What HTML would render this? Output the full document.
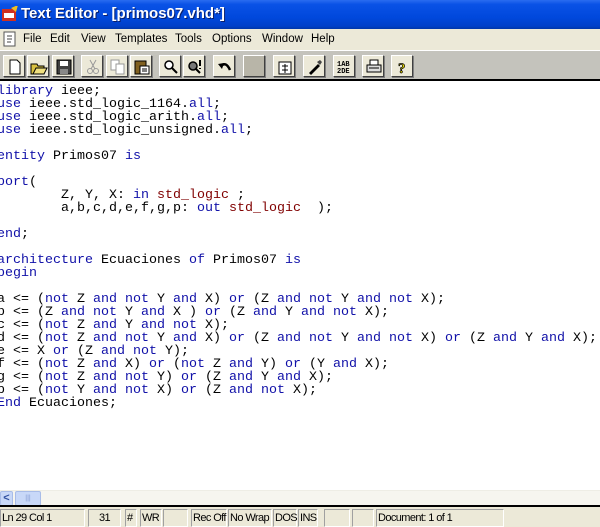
<!DOCTYPE html>
<html><head><meta charset="utf-8"><style>
*{margin:0;padding:0;box-sizing:border-box}
body{width:600px;height:527px;overflow:hidden;background:#fff;font-family:Tahoma,"Liberation Sans",sans-serif;position:relative}
.title{position:absolute;left:0;top:0;width:600px;height:29px;background:linear-gradient(#2a6cf0 0%,#0a52e6 15%,#0048dc 60%,#0040c8 90%,#0036a8 100%);color:#fff;font-size:15px;font-weight:bold;}
.title span{position:absolute;left:21px;top:5px;text-shadow:1px 1px 0 #0a1f6a;font-family:"Liberation Sans",sans-serif}
.menu{position:absolute;left:0;top:29px;width:600px;height:21px;background:#ece9d8;font-size:11.5px;font-family:"Liberation Sans",sans-serif}
.menu span{position:absolute;top:4px}
.tb{position:absolute;left:0;top:50px;width:600px;height:31px;background:#c4c3bc;border-top:1px solid #fff;border-bottom:2px solid #000}
.b{position:absolute;top:4px;width:22px;height:22px;background:#ece9d8;border:1px solid;border-color:#fff #404040 #404040 #fff;box-shadow:1px 1px 0 #808080}
.b svg{position:absolute;left:2px;top:2px}
.ed{position:absolute;left:0;top:82px;width:600px;height:408px;background:#fff;overflow:hidden}
pre{position:absolute;left:-3px;top:3px;font-family:"Liberation Mono",monospace;font-size:13.33px;line-height:13px;color:#000}
.k{color:#1010a8}.t{color:#800000}
.hs{position:absolute;left:0;top:490px;width:600px;height:16px;background:#f6f5ef;border-top:1px solid #eeede5}
.st{position:absolute;left:0;top:505px;width:600px;height:22px;background:#ece9d8;border-top:2px solid #000;font-size:11px;font-family:"Liberation Sans",sans-serif;}
.p{position:absolute;top:2px;height:18px;border:1px solid;border-color:#a0a0a0 #fff #fff #a0a0a0;padding:2px 0 0 1px;white-space:nowrap;letter-spacing:-0.6px}
</style></head><body>
<div class="title">
<svg style="position:absolute;left:1px;top:6px" width="18" height="17"><rect x="1" y="3" width="14" height="12" fill="#d03020"/><rect x="3" y="7" width="10" height="5" fill="#fff"/><path d="M10 2 L17 -1 L15 6z" fill="#f0c020"/></svg>
<span>Text Editor - [primos07.vhd*]</span></div>
<div class="menu">
<svg style="position:absolute;left:3px;top:2px" width="14" height="17"><rect x="1" y="1" width="11" height="14" fill="#fff" stroke="#555"/><path d="M4 5h5M4 8h5M4 11h4" stroke="#444"/></svg>
<span style="left:23px">File</span><span style="left:50px">Edit</span><span style="left:81px">View</span><span style="left:115px">Templates</span><span style="left:175px">Tools</span><span style="left:212px">Options</span><span style="left:262px">Window</span><span style="left:311px">Help</span></div>
<div class="tb">
<div class="b" style="left:3px"><svg width="18" height="18"><path d="M4 2h7l3 3v11H4z" fill="#fff" stroke="#000"/></svg></div>
<div class="b" style="left:27px"><svg width="18" height="18"><path d="M1 6h6l1 2h6v8H1z" fill="#d8c040" stroke="#000"/><path d="M3 16l3-6h11l-3 6z" fill="#f0e080" stroke="#000"/></svg></div>
<div class="b" style="left:52px"><svg width="18" height="18"><rect x="2" y="2" width="14" height="14" fill="#404040" stroke="#000"/><rect x="5" y="3" width="8" height="5" fill="#fff"/><rect x="5" y="11" width="8" height="5" fill="#888"/></svg></div>
<div class="b" style="left:81px"><svg width="18" height="18"><path d="M6 2l5 9M12 2l-5 9" stroke="#999"/><circle cx="6" cy="13" r="2.5" fill="none" stroke="#999"/><circle cx="12" cy="13" r="2.5" fill="none" stroke="#999"/></svg></div>
<div class="b" style="left:106px"><svg width="18" height="18"><rect x="2" y="2" width="8" height="10" fill="#fff" stroke="#999"/><rect x="7" y="6" width="8" height="10" fill="#fff" stroke="#999"/></svg></div>
<div class="b" style="left:130px"><svg width="18" height="18"><rect x="2" y="3" width="11" height="13" fill="#806020" stroke="#000"/><rect x="7" y="8" width="9" height="8" fill="#fff" stroke="#000"/><path d="M9 11h5M9 13h5" stroke="#000"/></svg></div>
<div class="b" style="left:159px"><svg width="18" height="18"><circle cx="7" cy="7" r="4" fill="#fff" stroke="#000" stroke-width="1.5"/><path d="M10 10l5 5" stroke="#000" stroke-width="2"/></svg></div>
<div class="b" style="left:183px"><svg width="18" height="18"><circle cx="7" cy="8" r="4" fill="#777" stroke="#000" stroke-width="1.5"/><path d="M10 11l4 4" stroke="#000" stroke-width="2"/><path d="M14 2v6M14 10v1" stroke="#000" stroke-width="2"/></svg></div>
<div class="b" style="left:213px"><svg width="18" height="18"><path d="M5 8 Q10 3 14 12" fill="none" stroke="#000" stroke-width="2.5"/><path d="M2 6l6-1-2 6z" fill="#000"/></svg></div>
<div class="b" style="left:243px;background:#b8b5a8"></div>
<div class="b" style="left:273px"><svg width="18" height="18"><rect x="3" y="4" width="12" height="12" fill="#fff" stroke="#000"/><path d="M6 8h6M9 6v9M6 12h6" stroke="#000"/></svg></div>
<div class="b" style="left:303px"><svg width="18" height="18"><path d="M3 15l9-9 2 2-9 9z" fill="#000"/><path d="M11 4l3-2 2 2-2 3z" fill="#444"/></svg></div>
<div class="b" style="left:333px"><svg width="18" height="18"><text x="1" y="8" font-size="7" font-family="Liberation Mono" font-weight="bold">1AB</text><text x="1" y="15" font-size="7" font-family="Liberation Mono" font-weight="bold">2DE</text></svg></div>
<div class="b" style="left:362px"><svg width="18" height="18"><rect x="2" y="7" width="14" height="7" fill="#ddd" stroke="#000"/><rect x="5" y="2" width="8" height="5" fill="#fff" stroke="#000"/><path d="M4 10h10" stroke="#000"/></svg></div>
<div class="b" style="left:391px"><svg width="18" height="18"><text x="4" y="15" font-size="15" font-weight="bold" font-family="Liberation Serif" fill="#e0d000" stroke="#000" stroke-width="0.7">?</text></svg></div>
</div>
<div class="ed"><pre><span class="k">library</span> ieee;
<span class="k">use</span> ieee.std_logic_1164.<span class="k">all</span>;
<span class="k">use</span> ieee.std_logic_arith.<span class="k">all</span>;
<span class="k">use</span> ieee.std_logic_unsigned.<span class="k">all</span>;

<span class="k">entity</span> Primos07 <span class="k">is</span>

<span class="k">port</span>(
        Z, Y, X: <span class="k">in</span> <span class="t">std_logic</span> ;
        a,b,c,d,e,f,g,p: <span class="k">out</span> <span class="t">std_logic</span>  );

<span class="k">end</span>;

<span class="k">architecture</span> Ecuaciones <span class="k">of</span> Primos07 <span class="k">is</span>
<span class="k">begin</span>

a &lt;= (<span class="k">not</span> Z <span class="k">and</span> <span class="k">not</span> Y <span class="k">and</span> X) <span class="k">or</span> (Z <span class="k">and</span> <span class="k">not</span> Y <span class="k">and</span> <span class="k">not</span> X);
b &lt;= (Z <span class="k">and</span> <span class="k">not</span> Y <span class="k">and</span> X ) <span class="k">or</span> (Z <span class="k">and</span> Y <span class="k">and</span> <span class="k">not</span> X);
c &lt;= (<span class="k">not</span> Z <span class="k">and</span> Y <span class="k">and</span> <span class="k">not</span> X);
d &lt;= (<span class="k">not</span> Z <span class="k">and</span> <span class="k">not</span> Y <span class="k">and</span> X) <span class="k">or</span> (Z <span class="k">and</span> <span class="k">not</span> Y <span class="k">and</span> <span class="k">not</span> X) <span class="k">or</span> (Z <span class="k">and</span> Y <span class="k">and</span> X);
e &lt;= X <span class="k">or</span> (Z <span class="k">and</span> <span class="k">not</span> Y);
f &lt;= (<span class="k">not</span> Z <span class="k">and</span> X) <span class="k">or</span> (<span class="k">not</span> Z <span class="k">and</span> Y) <span class="k">or</span> (Y <span class="k">and</span> X);
g &lt;= (<span class="k">not</span> Z <span class="k">and</span> <span class="k">not</span> Y) <span class="k">or</span> (Z <span class="k">and</span> Y <span class="k">and</span> X);
p &lt;= (<span class="k">not</span> Y <span class="k">and</span> <span class="k">not</span> X) <span class="k">or</span> (Z <span class="k">and</span> <span class="k">not</span> X);
<span class="k">End</span> Ecuaciones;</pre></div>
<div class="hs">
<div style="position:absolute;left:0;top:0;width:13px;height:15px;background:#c8d8f8;border:1px solid #a8bce8;border-radius:2px;color:#3050a0;font-size:11px;font-weight:bold;line-height:13px;text-align:center">&lt;</div>
<div style="position:absolute;left:15px;top:0;width:26px;height:15px;background:#c8d8f8;border:1px solid #a8bce8;border-radius:2px;color:#8098d0;font-size:7px;text-align:center;line-height:13px">|||</div>
</div>
<div class="st">
<div class="p" style="left:0;width:85px">Ln 29 Col 1</div>
<div class="p" style="left:88px;width:33px;text-align:center;padding-left:0">31</div>
<div class="p" style="left:125px;width:12px">#</div>
<div class="p" style="left:140px;width:22px">WR</div>
<div class="p" style="left:163px;width:25px"></div>
<div class="p" style="left:191px;width:36px">Rec Off</div>
<div class="p" style="left:228px;width:44px">No Wrap</div>
<div class="p" style="left:273px;width:24px">DOS</div>
<div class="p" style="left:298px;width:20px">INS</div>
<div class="p" style="left:324px;width:26px"></div>
<div class="p" style="left:352px;width:22px"></div>
<div class="p" style="left:376px;width:128px">Document: 1 of 1</div>
</div>
</body></html>
